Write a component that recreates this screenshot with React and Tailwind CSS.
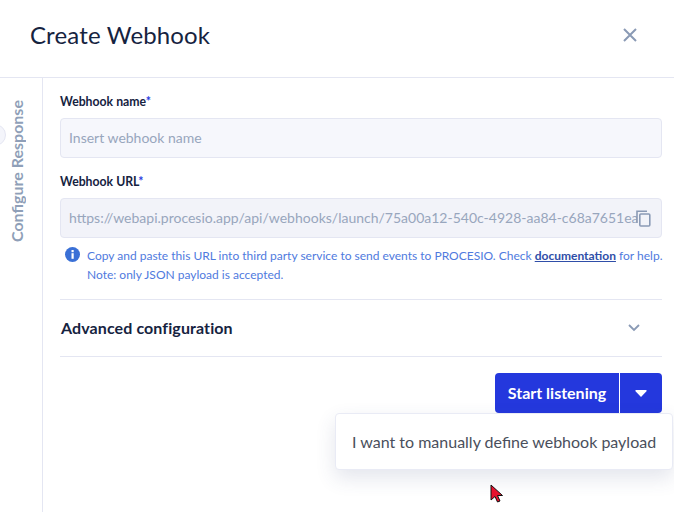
import React from "react";

function Field({ label, children }) {
  return (
    <div>
      <label className="block text-[12.25px] leading-[16px] font-bold text-[#16233f] mb-[8px]">
        {label}
        <span className="text-[#2a3be0]">*</span>
      </label>
      {children}
    </div>
  );
}

export default function App() {
  return (
    <div className="relative w-[674px] h-[512px] overflow-hidden bg-white font-['Lato',sans-serif]">
      <header className="h-[78px] border-b border-[#e4e6f2] flex items-center justify-between pl-[30px] pr-[36px] pb-[8px]">
        <h1 className="text-[24px] text-[#16233f] tracking-[0.15px]">Create Webhook</h1>
        <svg width="16" height="16" viewBox="0 0 16 16" fill="none" stroke="#8a9ab5" strokeWidth="2">
          <path d="M2 2l12 12M14 2L2 14" />
        </svg>
      </header>

      <div className="flex h-[434px]">
        <aside className="relative w-[43px] shrink-0 border-r border-[#e4e6f2] pt-[22px] flex justify-center">
          <span className="[writing-mode:vertical-rl] rotate-180 text-[16px] leading-[18px] font-bold text-[#8f9fb8] h-[143px] mr-[9px] text-center whitespace-nowrap">
            Configure Response
          </span>
          <div className="absolute left-[-16px] top-[46px] w-[22px] h-[22px] rounded-full border border-[#e4e6f2] bg-[#f4f5fb]" />
        </aside>

        <main className="flex-1 min-w-0 pl-[17px] pr-[12px] pt-[16px]">
          <Field label="Webhook name">
            <div className="h-[40px] rounded-[4px] border border-[#e4e6f2] bg-[#f6f7fc] px-[8px] pb-[2px] flex items-center text-[14px] text-[#98a6bd]">
              Insert webhook name
            </div>
          </Field>

          <div className="mt-[16px]">
            <Field label="Webhook URL">
              <div className="relative h-[40px] rounded-[4px] border border-[#e4e6f2] bg-[#f2f3f9] pl-[8px] pr-[24px] pb-[2px] flex items-center text-[14px] text-[#98a6bd] overflow-hidden whitespace-nowrap">
                <span className="overflow-hidden">https://webapi.procesio.app/api/webhooks/launch/75a00a12-540c-4928-aa84-c68a7651ea9f</span>
                <svg className="absolute right-[10px] top-[11px]" width="15" height="17" viewBox="0 0 15 17" fill="none" stroke="#8a9ab5" strokeWidth="1.6">
                  <path d="M1 13V1.2h10" />
                  <rect x="3.8" y="4" width="10" height="12" rx="1" />
                </svg>
              </div>
            </Field>
          </div>

          <div className="flex mt-[8px] pl-[5px]">
            <svg className="shrink-0 mt-[1px]" width="15" height="15" viewBox="0 0 15 15">
              <circle cx="7.5" cy="7.5" r="7.5" fill="#3a70d6" />
              <rect x="6.5" y="6.2" width="2.2" height="5.6" fill="#fff" />
              <rect x="6.5" y="3" width="2.2" height="2.2" fill="#fff" />
            </svg>
            <p className="ml-[7px] text-[12px] leading-[19px] text-[#4f7ade] whitespace-nowrap">
              Copy and paste this URL into third party service to send events to PROCESIO. Check{" "}
              <a className="underline font-bold text-[#2f4ea8]">documentation</a> for help.
              <br />
              Note: only JSON payload is accepted.
            </p>
          </div>

          <div className="mt-[15px] h-[58px] border-y border-[#e4e6f2] flex items-center justify-between pl-[1px] pr-[22px]">
            <span className="text-[16px] font-bold text-[#16233f] tracking-[0.1px]">Advanced configuration</span>
            <svg width="12" height="8" viewBox="0 0 12 8" fill="none" stroke="#8a9ab5" strokeWidth="1.8">
              <path d="M1 1l5 5 5-5" />
            </svg>
          </div>

          <div className="flex justify-end mt-[16px]">
            <div className="h-[40px] rounded-[4px] bg-[#2438dd] text-white flex items-stretch">
              <button className="w-[124px] text-[16px] font-bold">Start listening</button>
              <div className="w-px bg-white" />
              <button className="w-[42px] flex items-center justify-center">
                <svg width="12" height="7" viewBox="0 0 12 7"><path d="M1 0h10a.8.8 0 0 1 .5 1.3L6 7 .5 1.3A.8.8 0 0 1 1 0z" fill="#fff" /></svg>
              </button>
            </div>
          </div>
        </main>
      </div>

      <div className="absolute left-[335px] top-[413px] w-[338px] h-[57px] rounded-[4px] border border-[#e9ebf5] bg-white shadow-[0_8px_20px_rgba(60,70,120,0.14)] flex items-center pl-[16px] text-[16px] text-[#4a4f5c] whitespace-nowrap">
        I want to manually define webhook payload
      </div>

      <svg className="absolute left-[490px] top-[484px]" width="14" height="20" viewBox="0 0 14 20">
        <path d="M1 1v15l4-3.5 2.5 5.5 2.5-1-2.5-5.5H12.5z" fill="#e8112d" stroke="#111" strokeWidth="1" />
      </svg>
    </div>
  );
}
